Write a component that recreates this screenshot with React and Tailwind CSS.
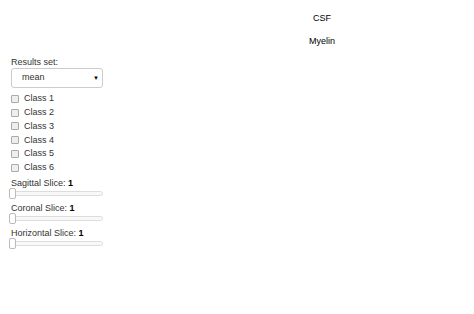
import { useState } from "react";

const classes = ["Class 1", "Class 2", "Class 3", "Class 4", "Class 5", "Class 6"];
const slices = ["Sagittal", "Coronal", "Horizontal"];

export default function App() {
  const [sel, setSel] = useState("mean");
  return (
    <div className="w-[474px] h-[314px] bg-white flex text-[9px] text-[#333] overflow-hidden" style={{ fontFamily: '"Liberation Sans", Arial, sans-serif' }}>
      <div className="w-[170px] pl-[11px] pt-[57px]">
        <div className="leading-[11px]">Results set:</div>
        <div className="relative w-[92px] h-[20px] mt-[0px] border border-[#ccc] rounded-[3px] flex items-center pl-[10px] pr-[3px]">
          <span className="flex-1">{sel}</span>
          <span className="text-[6px] text-black">▼</span>
          <select value={sel} onChange={(e) => setSel(e.target.value)} className="absolute inset-0 opacity-0">
            <option>mean</option>
            <option>std</option>
          </select>
        </div>
        <div className="mt-[4px] flex flex-col">
          {classes.map((c) => (
            <label key={c} className="flex items-center h-[13.8px]">
              <span className="w-[8px] h-[8px] border border-[#aaa] bg-[#eee] rounded-[1px] mr-[5px]" />
              <span>{c}</span>
            </label>
          ))}
        </div>
        <div className="mt-[3px] flex flex-col gap-[7px]">
          {slices.map((s) => (
            <div key={s}>
              <div className="leading-[11px]">
                {s} Slice: <b className="text-black">1</b>
              </div>
              <div className="relative mt-[2px] w-[92px] h-[5px] border border-[#ddd] rounded-full bg-[#f8f8f8]">
                <span className="absolute left-[-3px] top-[-4px] w-[7px] h-[11px] border border-[#bbb] bg-white rounded-[2px]" />
              </div>
            </div>
          ))}
        </div>
      </div>
      <div className="flex-1 flex flex-col items-center pt-[13px] text-black">
        <div className="leading-[11px]">CSF</div>
        <div className="leading-[11px] mt-[12px]">Myelin</div>
      </div>
    </div>
  );
}
